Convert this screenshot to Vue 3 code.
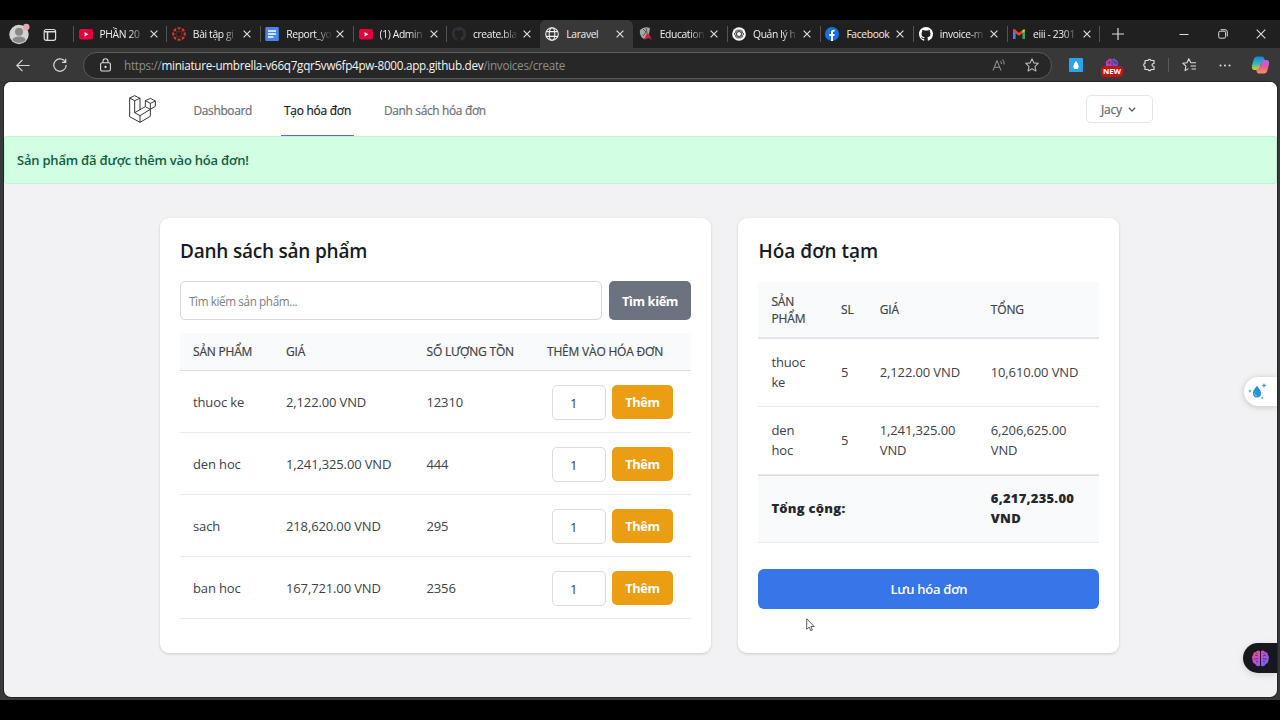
<script setup>
const tabs = [
  { icon: 'yt', title: 'PHẦN 20', fade: true },
  { icon: 'canvas', title: 'Bài tập gi', fade: true },
  { icon: 'docs', title: 'Report_yo', fade: true },
  { icon: 'yt', title: '(1) Admin', fade: true },
  { icon: 'ghdark', title: 'create.bla', fade: true },
  { icon: 'globe', title: 'Laravel', active: true },
  { icon: 'edu', title: 'Education', fade: true },
  { icon: 'gpt', title: 'Quản lý h', fade: true },
  { icon: 'fb', title: 'Facebook' },
  { icon: 'gh', title: 'invoice-m', fade: true },
  { icon: 'gmail', title: 'eiii - 2301', fade: true },
]
const products = [
  ['thuoc ke', '2,122.00 VND', '12310'],
  ['den hoc', '1,241,325.00 VND', '444'],
  ['sach', '218,620.00 VND', '295'],
  ['ban hoc', '167,721.00 VND', '2356'],
]
const invoice = [
  ['thuoc ke', '5', '2,122.00 VND', '10,610.00 VND'],
  ['den hoc', '5', '1,241,325.00 VND', '6,206,625.00 VND'],
]
const spokes = [0, 45, 90, 135, 180, 225, 270, 315]
</script>

<template>
  <div class="screen">
    <div class="browser">
      <header class="tabbar">
        <div class="profile">
          <svg width="24" height="24" viewBox="0 0 24 24">
            <circle cx="11" cy="12.500" r="9.700" fill="#d4d2d1" />
            <circle cx="11" cy="9.800" r="4" fill="#8b8988" />
            <path d="M4.500 18.200c0-5 13-5 13 0a9 9 0 0 1-13 0z" fill="#8b8988" />
            <circle cx="18.300" cy="5" r="3.200" fill="#e8a6b2" />
          </svg>
        </div>
        <svg class="workspace" width="14" height="14" viewBox="0 0 14 14" fill="none" stroke="#dcdcdc" stroke-width="1.200">
          <rect x="1.200" y="1.500" width="11.400" height="10.800" rx="2" />
          <path d="M1.500 3.700h11M4.500 4v8" stroke-width="1.600" />
        </svg>
        <nav class="tabs">
          <div v-for="(t, i) in tabs" :key="i" class="tab" :class="{ active: t.active, next: i === 6 }">
            <svg class="fav" width="14" height="14" viewBox="0 0 14 14">
              <template v-if="t.icon === 'yt'">
                <rect x="0" y="2" width="14" height="10.500" rx="2" fill="#e3003c" />
                <path d="M5.600 5v4.500l3.600-2.250z" fill="#fff" />
              </template>
              <g v-else-if="t.icon === 'canvas'" fill="#d8352c">
                <g v-for="a in spokes" :key="a" :transform="`rotate(${a} 7 7)`">
                  <path d="M5.100.5Q7-.2 8.900.5 8.600 2.600 7 2.600T5.100.5z" />
                  <circle cx="7" cy="4" r=".6" />
                </g>
              </g>
              <template v-else-if="t.icon === 'docs'">
                <rect x=".3" y="0" width="13.500" height="14" rx="1" fill="#4a86ea" />
                <path d="M3 4h8M3 7h8M3 10h5.500" stroke="#fff" stroke-width="1.400" />
              </template>
              <path v-else-if="t.icon === 'gh' || t.icon === 'ghdark'" transform="scale(.875)" :fill="t.icon === 'gh' ? '#fff' : '#30343a'" d="M8 0C3.580 0 0 3.580 0 8c0 3.540 2.290 6.530 5.470 7.590.4.070.55-.17.55-.38 0-.19-.01-.82-.01-1.490-2.010.37-2.530-.49-2.690-.94-.09-.23-.48-.94-.82-1.130-.28-.15-.68-.52-.01-.53.63-.01 1.080.58 1.230.82.72 1.210 1.870.87 2.330.66.070-.52.28-.87.51-1.070-1.780-.2-3.640-.89-3.640-3.950 0-.87.31-1.590.82-2.150-.08-.2-.36-1.020.08-2.120 0 0 .67-.21 2.200.82.64-.18 1.320-.27 2-.27s1.360.09 2 .27c1.530-1.040 2.200-.82 2.200-.82.44 1.100.16 1.920.08 2.120.51.56.82 1.270.82 2.150 0 3.070-1.870 3.750-3.650 3.950.29.25.54.73.54 1.480 0 1.070-.01 1.930-.01 2.200 0 .21.15.46.55.38A8 8 0 0 0 16 8c0-4.420-3.580-8-8-8z" />
              <g v-else-if="t.icon === 'globe'" fill="none" stroke="#eee" stroke-width="1.100">
                <circle cx="7" cy="7" r="6.300" /><ellipse cx="7" cy="7" rx="2.800" ry="6.300" /><path d="M1.300 4.600h11.400M1.300 9.400h11.400" />
              </g>
              <template v-else-if="t.icon === 'edu'">
                <path d="M1 3Q5-1 11 1L10 7 5 12Q0 9 1 3z" fill="#a6a6a8" />
                <path d="M4 2l3 3-3 4M7 1l1 5" stroke="#555" fill="none" />
                <path d="M5 13l3-7 2 1 3 6-3-2-3 1z" fill="#d3223c" />
              </template>
              <template v-else-if="t.icon === 'gpt'">
                <circle cx="7" cy="7" r="6.800" fill="#fff" />
                <g fill="none" stroke="#333" stroke-width=".8">
                  <ellipse v-for="a in [0, 60, 120]" :key="a" cx="7" cy="7" rx="4.600" ry="2.300" :transform="`rotate(${a} 7 7)`" />
                </g>
              </template>
              <template v-else-if="t.icon === 'fb'">
                <circle cx="7" cy="7" r="7" fill="#1670e8" />
                <path d="M6 14V9H4.200V6.900H6V5.300c0-2 1.400-2.900 3.700-2.500v1.800c-1.200-.1-1.700.1-1.700.9v1.400h1.700L9.300 9H8v5z" fill="#fff" />
              </template>
              <template v-else>
                <path d="M1 2.500h2.600V12H1z" fill="#4285f4" />
                <path d="M10.400 3H13v9h-2.600z" fill="#34a853" />
                <path d="M1 2.500l1.500-.3L7 5.800v3L1 4.500z" fill="#ea4335" />
                <path d="M7 5.800l3.400-2.600v3L7 8.800z" fill="#ea4335" />
                <path d="M10.400 3.200Q13 1 13 4l-2.600 2.200z" fill="#fbbc04" />
              </template>
            </svg>
            <span class="title" :class="{ fade: t.fade }">{{ t.title }}</span>
            <svg class="x" width="8" height="8" viewBox="0 0 8 8"><path d="M.6.6l6.800 6.800M7.400.6L.6 7.400" stroke="#e4e4e4" stroke-width="1.100" /></svg>
          </div>
        </nav>
        <svg class="plus" width="12" height="12" viewBox="0 0 12 12"><path d="M6 0v12M0 6h12" stroke="#ddd" stroke-width="1.200" /></svg>
        <div class="winbtns">
          <svg width="10" height="10" viewBox="0 0 10 10"><path d="M.5 5.500h9" stroke="#ddd" /></svg>
          <svg width="10" height="10" viewBox="0 0 10 10" fill="none" stroke="#ddd"><rect x=".7" y="2.200" width="6.900" height="7" rx="1.500" /><path d="M2.700.7h4.300q2.300 0 2.300 2.300v4.500" /></svg>
          <svg width="10" height="10" viewBox="0 0 10 10"><path d="M.7.7l8.600 8.600M9.300.7L.7 9.300" stroke="#ddd" stroke-width="1.100" /></svg>
        </div>
      </header>

      <div class="toolbar">
        <svg class="back" width="14" height="13" viewBox="0 0 14 13" fill="none" stroke="#d6d6d6" stroke-width="1.200"><path d="M13.700 6.500H1M6.500.8L.8 6.500l5.700 5.700" /></svg>
        <svg class="reload" width="14" height="14" viewBox="0 0 14 14" fill="none" stroke="#d6d6d6" stroke-width="1.200"><path d="M12.400 4A6.200 6.200 0 1 0 13.200 7M12.700.7V4.300H9" /></svg>
        <div class="address">
          <svg class="lock" width="11" height="14" viewBox="0 0 11 14" fill="none" stroke="#ddd" stroke-width="1.100"><rect x=".6" y="4.800" width="9.800" height="8.200" rx="1.500" /><path d="M3 4.800V3.200a2.500 2.500 0 0 1 5 0v1.600" /><circle cx="5.500" cy="9" r=".6" fill="#ddd" /></svg>
          <span class="url"><i>https://</i><b>miniature-umbrella-v66q7gqr5vw6fp4pw-8000.app.github.dev</b><i>/invoices/create</i></span>
          <svg class="read" width="14" height="14" viewBox="0 0 14 14" fill="none" stroke="#999" stroke-width="1"><path d="M1 12.500L5 2.500l4 10M2.300 9.300h5.400M8.500 3q1.200 1.200.8 3M10.500 1.500q2.200 2 1.500 5" /></svg>
          <svg class="star" width="14" height="14" viewBox="0 0 14 14" fill="none" stroke="#b5b5b5" stroke-width="1.100" stroke-linejoin="round"><path d="M7 .8l1.900 4.100 4.400.5-3.300 3 .9 4.500L7 10.700l-3.900 2.200.9-4.500-3.300-3 4.400-.5z" /></svg>
        </div>
        <div class="exts">
          <svg class="e1" width="14" height="14" viewBox="0 0 14 14"><rect width="14" height="14" rx="1" fill="#2aa5ea" /><path d="M7 2.800C8 4.800 9.800 6.500 9.600 8.500a2.600 2.600 0 0 1-5.200 0C4.300 6.500 6 4.800 7 2.800z" fill="#fff" /></svg>
          <div class="new-ext">
            <svg width="14" height="9" viewBox="0 0 16 10"><path d="M7.700 10V1Q4-.5 3.300 2.500.2 3 1 6L1 10z" fill="#b944a8" /><path d="M8.300 10V1Q12-.5 12.700 2.500 15.800 3 15 6v4z" fill="#7150c9" /><path d="M3 5l3 1M5 3l1 2M10 3l1 2M11 6l3-1" stroke="#402454" /></svg>
            <span>NEW</span>
          </div>
          <svg class="puzzle" width="14" height="14" viewBox="0 0 14 14" fill="none" stroke="#ddd" stroke-width="1.200" stroke-linejoin="round"><path d="M4 2.500h2a1.600 1.600 0 0 1 3.100 0H12v3q-2 0-2 1.500T12 8.500v3H9.100a1.600 1.600 0 0 1-3.100 0H3V8.700a1.700 1.700 0 0 1 0-3.300V3.500q0-1 1-1z" /></svg>
          <span class="bar"></span>
          <svg class="favs" width="15" height="14" viewBox="0 0 15 14" fill="none" stroke="#ddd" stroke-width="1.100" stroke-linejoin="round"><path d="M8.800 4.800L6.800.8 5 4.700l-4.300.5 3.200 3-.8 4.400 3.400-2M8.800 4.800H14M8.500 8H14M9.500 11H14" /></svg>
          <svg class="dots" width="12" height="3" viewBox="0 0 12 3" fill="#e4e4e4"><circle cx="1.500" cy="1.500" r="1" /><circle cx="6" cy="1.500" r="1" /><circle cx="10.500" cy="1.500" r="1" /></svg>
          <svg class="copilot" width="19" height="18" viewBox="0 0 18 18">
            <defs>
              <linearGradient id="cpa" x1="0" y1="0" x2="0" y2="1"><stop offset="0" stop-color="#1b7fe0" /><stop offset=".5" stop-color="#2fb7b5" /><stop offset="1" stop-color="#e6c62f" /></linearGradient>
              <linearGradient id="cpb" x1="0" y1="0" x2="0" y2="1"><stop offset="0" stop-color="#a765ec" /><stop offset=".5" stop-color="#ec5699" /><stop offset="1" stop-color="#fb9458" /></linearGradient>
            </defs>
            <path d="M5.500.5h5.200Q12.500.5 13 3l.2 1.500h-1.700Q10 4.500 9.500 7l-1.200 4.700Q7.700 14 5.500 14H3Q0 14 .4 10L2 4Q3 .5 5.500.5z" fill="url(#cpa)" />
            <path d="M12.500 17.500H7.300Q5.500 17.500 5 15l-.2-1.500h1.700Q8 13.500 8.500 11l1.200-4.700Q10.300 4 12.500 4H15q3 0 2.600 4L16 14q-1 3.500-3.500 3.500z" fill="url(#cpb)" />
          </svg>
        </div>
      </div>

      <main class="page">
        <nav class="nav">
          <svg class="logo" width="27" height="28" viewBox="388 45 81 84" fill="none" stroke="#26282b" stroke-width="2.800" stroke-linejoin="round">
            <path d="M390 54l15-7 16 8-16 7zM390 54v56l31 17 31-18V88M405 62v36l32-18M421 55v35M405 98l16 9 31-19M421 107v20M437 62l15-7 15 8v16l-15 9-15-8zM437 62l15 8 15-7M452 70v18" />
          </svg>
          <a class="l1">Dashboard</a>
          <a class="l2 on">Tạo hóa đơn</a>
          <a class="l3">Danh sách hóa đơn</a>
          <button class="user"><span>Jacy</span><svg width="8" height="5" viewBox="0 0 8 5"><path d="M.8.700L4 4 7.200.7" fill="none" stroke="#5b6069" stroke-width="1.300" /></svg></button>
        </nav>
        <div class="alert"><span>Sản phẩm đã được thêm vào hóa đơn!</span></div>

        <div class="content">
          <section class="card products">
            <h2>Danh sách sản phẩm</h2>
            <div class="search"><div class="input"><span>Tìm kiếm sản phẩm...</span></div><button><span>Tìm kiếm</span></button></div>
            <div class="row head"><span>SẢN PHẨM</span><span>GIÁ</span><span>SỐ LƯỢNG TỒN</span><span>THÊM VÀO HÓA ĐƠN</span></div>
            <div v-for="p in products" :key="p[0]" class="row item">
              <span v-for="c in p" :key="c">{{ c }}</span>
              <div class="add"><div class="qty">1</div><button>Thêm</button></div>
            </div>
          </section>

          <section class="card invoice">
            <h2>Hóa đơn tạm</h2>
            <div class="irow ihead"><span>SẢN<br>PHẨM</span><span>SL</span><span>GIÁ</span><span>TỔNG</span></div>
            <div v-for="p in invoice" :key="p[0]" class="irow"><span v-for="(c, i) in p" :key="i" :class="'c' + i">{{ c }}</span></div>
            <div class="irow total"><span class="label">Tổng cộng:</span><span>6,217,235.00<br>VND</span></div>
            <button class="save"><span>Lưu hóa đơn</span></button>
          </section>
        </div>

        <div class="float water">
          <svg width="20" height="18" viewBox="0 0 20 18"><path d="M9 2.500c1.300 2.500 4.200 4.500 4 8a4 4 0 0 1-8 0c-.2-3.500 2.700-5.500 4-8z" fill="#2593d8" /><path d="M6.500 10a2.700 2.700 0 0 0 2.500 3" stroke="#79c8f2" fill="none" /><path d="M16 0l.7 1.800 1.800.7-1.800.7L16 5l-.7-1.800-1.800-.7 1.800-.7zM2 6l.5 1.500L4 8l-1.500.5L2 10l-.5-1.500L0 8l1.500-.5zM14.200 13.500l.4 1.100 1.100.4-1.100.4-.4 1.100-.4-1.100-1.100-.4 1.100-.4z" fill="#2b9ddd" /></svg>
        </div>
        <div class="float brain">
          <svg width="17" height="17" viewBox="0 0 17 17">
            <defs><linearGradient id="br" x1="0" y1="0" x2="1" y2="1"><stop offset="0" stop-color="#f0574f" /><stop offset=".4" stop-color="#c94bd6" /><stop offset="1" stop-color="#506ef0" /></linearGradient></defs>
            <path d="M8 1Q5-.5 4 2 1 2 1.200 5-.8 7 .6 9.500 0 13 3 13.800 5 17.500 8 15.800zM9 1q3-1.500 4 1 3 0 2.800 3 2 2 .6 4.500.6 3.500-2.400 4.300-2 3.700-5 2z" fill="url(#br)" />
            <path d="M3 5l3 1M2 9h3l1-1M4 12l2-1M14 5l-3 1M15 9h-3l-1-1M13 12l-2-1M5 3v1M12 3v1" stroke="#3b235c" stroke-width=".7" fill="none" />
          </svg>
        </div>
        <svg class="cursor" width="9" height="14" viewBox="0 0 9 14"><path d="M.7.8v10.500l2.500-2.200 1.600 3.600 1.600-.7-1.500-3.500h3.300z" fill="#fff" stroke="#333" stroke-width=".8" /></svg>
      </main>
    </div>
  </div>
</template>

<style>
html, body { margin: 0; background: #000; overflow: hidden; }
</style>

<style scoped>
* { box-sizing: border-box; }
.screen { width: 1280px; height: 720px; background: #000; padding: 20px 0; font-family: "Open Sans", "Noto Sans", sans-serif; overflow: hidden; }
svg { display: block; flex: none; }
button { border: 0; padding: 0; font-family: inherit; }
.browser { height: 680px; background: #383838; display: flex; flex-direction: column; }
.tabbar { height: 28px; background: #202020; display: flex; align-items: center; flex: none; }
.profile { margin-left: 8px; width: 24px; }
.workspace { margin-left: 11px; margin-top: 1px; }
.tabs { display: flex; margin-left: 16px; width: 1027px; height: 28px; position: relative; }
.tab { flex: 1; min-width: 0; display: flex; align-items: center; position: relative; padding-left: 5.500px; }
.tab::before { content: ""; position: absolute; left: 0; top: 6px; height: 16px; width: 1px; background: #545454; }
.tabs::after { content: ""; position: absolute; right: 0; top: 6px; height: 16px; width: 1px; background: #545454; }
.tab.active { background: #383838; border-radius: 6px 6px 0 0; }
.tab.active::before, .tab.next::before { display: none; }
.title { width: 49px; margin-left: 7px; font-size: 10.300px; letter-spacing: -.36px; color: #f0f0f0; white-space: nowrap; line-height: 18px; }
.fade { -webkit-mask-image: linear-gradient(90deg, #000 60%, rgba(0,0,0,.15) 88%); mask-image: linear-gradient(90deg, #000 60%, rgba(0,0,0,.15) 88%); }
.tab .x { margin-left: 1px; }
.plus { margin-left: 12px; }
.winbtns { display: flex; gap: 28.500px; margin-left: 55px; }
.toolbar { height: 34px; display: flex; align-items: center; flex: none; }
.back { margin-left: 16px; }
.reload { margin-left: 23px; }
.address { margin-left: 16px; width: 969px; height: 27px; border: 1px solid #5a5a5a; border-radius: 14px; background: #272727; display: flex; align-items: center; }
.lock { margin-left: 16px; }
.url { margin-left: 13px; font-size: 11.700px; line-height: 24px; white-space: nowrap; letter-spacing: -.29px; flex: 1; }
.url i { font-style: normal; color: #8e8e8e; }
.url b { font-weight: 400; color: #f4f4f4; }
.read { margin-right: 19px; }
.star { margin-right: 12px; }
.exts { display: flex; align-items: center; flex: 1; height: 34px; }
.e1 { margin-left: 17px; }
.new-ext { width: 22px; margin-left: 18px; height: 25px; display: flex; flex-direction: column; align-items: center; padding-top: 5px; }
.new-ext span { background: #c8101b; color: #fff; font-size: 7.800px; font-weight: 700; line-height: 11px; height: 11px; border-radius: 4px; padding: 0 2px; margin-top: -1px; }
.puzzle { margin-left: 19px; }
.bar { width: 1px; height: 14px; background: #5a5a5a; margin-left: 12px; }
.favs { margin-left: 13px; }
.dots { margin-left: 22px; }
.copilot { margin-left: 20px; }
.page { margin: 0 3px 3px 4px; height: 615px; background: #f2f2f4; border-radius: 7px; position: relative; overflow: hidden; flex: none; box-shadow: 0 0 0 1px #252525; }
.nav { height: 54px; background: #fff; display: flex; align-items: center; padding-left: 125px; }
.logo { margin-top: -1px; }
.nav a { font-size: 11.900px; -webkit-text-stroke: .2px; color: #6c7079; height: 54px; line-height: 57px; white-space: nowrap; letter-spacing: -.32px; }
.nav .l1 { margin-left: 37.500px; width: 58px; }
.nav .l2 { margin-left: 29px; width: 73.500px; padding-left: 3.500px; color: #15181f; border-bottom: 1px solid #5468f0; letter-spacing: -.22px; }
.nav .l3 { margin-left: 30px; }
.user { margin-left: auto; margin-right: 124px; width: 67px; height: 28px; border: 1px solid #e4e5e8; border-radius: 5px; background: #fff; display: flex; align-items: center; justify-content: center; gap: 6px; font-size: 12px; -webkit-text-stroke: .2px; color: #62666f; letter-spacing: -.2px; padding-right: 2px; }
.alert { height: 48px; background: #d2fee4; border: 1px solid #bdf3d4; border-radius: 3px; padding-left: 12px; font-size: 13px; font-weight: 600; line-height: 47px; color: #11603f; letter-spacing: -.21px; }
.content { display: grid; grid-template-columns: 551px 381px; gap: 27.400px; padding: 33.500px 0 0 156px; }
.card { height: 435px; background: #fff; border-radius: 9px; padding: 0 20px; box-shadow: 0 1px 3px #0000002a; }
h2 { margin: 0; height: 63px; line-height: 66px; font-size: 19px; font-weight: 600; color: #171b23; white-space: nowrap; letter-spacing: -.22px; }
.search { display: flex; gap: 7px; height: 39px; }
.input { width: 422px; border: 1px solid #d5d7dc; border-radius: 5px; padding-left: 8px; font-size: 11.700px; line-height: 38px; color: #7b7e85; letter-spacing: -.38px; }
.search button { flex: 1; border-radius: 5px; background: #6b7280; color: #fff; font-size: 12.800px; font-weight: 700; letter-spacing: -.4px; padding-top: 1px; }
.row { display: grid; grid-template-columns: 93px 140.500px 120.500px 157px; align-items: center; height: 62px; border-bottom: 1px solid #e8e9ec; color: #3d4148; font-size: 13px; white-space: nowrap; letter-spacing: -.13px; }
.row > span { padding-left: 13px; }
.item > span { padding-top: 1px; }
.head { margin-top: 13px; height: 38.500px; background: #f9fafb; border-bottom-color: #dadce0; font-size: 12px; -webkit-text-stroke: .2px; letter-spacing: -.2px; }
.head > span { padding-top: 1px; }
.add { display: flex; align-items: center; padding-left: 18px; padding-top: 1px; gap: 6px; }
.qty { width: 54px; height: 35px; border: 1px solid #d9dbdf; border-radius: 5px; padding-left: 17px; line-height: 34px; }
.add button { width: 61px; height: 33.500px; border-radius: 5px; background: #eb9d13; color: #fff; font-size: 12.800px; font-weight: 700; letter-spacing: -.3px; }
.invoice h2 { height: 64px; line-height: 67px; letter-spacing: 0; }
.irow { display: grid; grid-template-columns: 69.700px 38.700px 111px 121.600px; width: 341px; height: 68px; align-items: center; border-bottom: 1px solid #e8e9ec; font-size: 13px; line-height: 20px; color: #3d4148; letter-spacing: -.13px; }
.irow > span { padding-left: 13px; }
.irow .c0 { padding-right: 20px; }
.irow .c2 { padding-right: 13px; }
.irow .c3 { padding-right: 13px; }
.ihead { height: 57px; line-height: 17px; font-size: 12px; -webkit-text-stroke: .2px; background: #f9fafb; border-bottom: 2px solid #e2e4e7; }
.ihead > span { padding-top: 1px; }
.total { background: #f9fafb; border-top: 1px solid #dadce0; font-weight: 800; color: #23272e; letter-spacing: .25px; }
.total > span { padding-bottom: 2px; }
.total .label { grid-column: span 3; }
.save { display: block; margin-top: 26px; width: 341px; height: 40px; border-radius: 6px; background: #3776e9; color: #fff; font-size: 13px; font-weight: 600; letter-spacing: -.3px; }
.float { position: absolute; right: 0; display: flex; align-items: center; border-radius: 16px 0 0 16px; }
.water { top: 295px; width: 33px; height: 29px; background: #fff; box-shadow: 0 1px 6px #0003; padding-left: 4px; }
.brain { top: 561px; width: 34px; height: 30px; background: #171720; padding-left: 9px; box-shadow: 0 2px 7px #0002; }
.cursor { position: absolute; left: 802px; top: 536px; }
</style>
